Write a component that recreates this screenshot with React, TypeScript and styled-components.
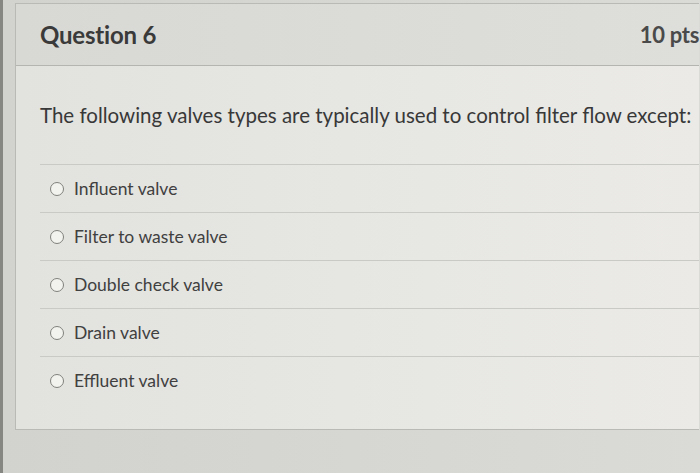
import styled, { createGlobalStyle } from 'styled-components';

const GlobalStyle = createGlobalStyle`
  html, body {
    margin: 0;
    padding: 0;
    width: 700px;
    height: 473px;
    overflow: hidden;
    background: #d3d3cf;
  }
  body {
    font-family: Lato, "Open Sans", sans-serif;
    color: #3c3c3c;
  }
`;

const Screen = styled.div`
  width: 700px;
  height: 473px;
  padding: 3px 0 0 0;
  box-sizing: border-box;
  border-left: 3px solid #868682;
  background: linear-gradient(90deg, #d2d2ce 0%, #dadad6 100%);
  overflow: hidden;
`;

const Card = styled.div`
  width: 684px;
  margin-left: 12px;
  box-sizing: border-box;
  border: 1px solid #b9b9b5;
  border-right: none;
  background: linear-gradient(90deg, #e2e2de 0%, #e7e7e3 60%, #ebeae6 100%);
`;

const Header = styled.div`
  height: 61px;
  display: flex;
  align-items: center;
  justify-content: space-between;
  padding: 0 0 0 24px;
  background: linear-gradient(90deg, #d8d8d4 0%, #dededa 100%);
  border-bottom: 1px solid #b4b4b0;
`;

const Title = styled.h2`
  margin: 0;
  font-size: 24px;
  font-weight: 700;
  color: #3a3a3a;
  letter-spacing: -0.2px;
`;

const Points = styled.span`
  font-size: 22px;
  font-weight: 700;
  color: #4a4a4a;
  letter-spacing: -0.3px;
`;

const Body = styled.div`
  padding: 0 0 25px 24px;
`;

const QuestionText = styled.p`
  margin: 0;
  height: 98px;
  display: flex;
  align-items: center;
  font-size: 20.5px;
  color: #383838;
`;

const Answer = styled.label`
  display: flex;
  align-items: center;
  gap: 10px;
  height: 47px;
  padding-left: 10px;
  border-top: 1px solid #c9c9c5;
  font-size: 17.5px;
  color: #404040;
`;

const Radio = styled.span`
  width: 12px;
  height: 12px;
  border: 1.5px solid #80807d;
  border-radius: 50%;
  background: #f2f2ef;
  flex-shrink: 0;
`;

const options = [
  'Influent valve',
  'Filter to waste valve',
  'Double check valve',
  'Drain valve',
  'Effluent valve',
];

export default function App() {
  return (
    <>
      <GlobalStyle />
      <Screen>
        <Card>
          <Header>
            <Title>Question 6</Title>
            <Points>10 pts</Points>
          </Header>
          <Body>
            <QuestionText>
              The following valves types are typically used to control filter flow except:
            </QuestionText>
            <div>
              {options.map((o) => (
                <Answer key={o}>
                  <Radio />
                  {o}
                </Answer>
              ))}
            </div>
          </Body>
        </Card>
      </Screen>
    </>
  );
}
